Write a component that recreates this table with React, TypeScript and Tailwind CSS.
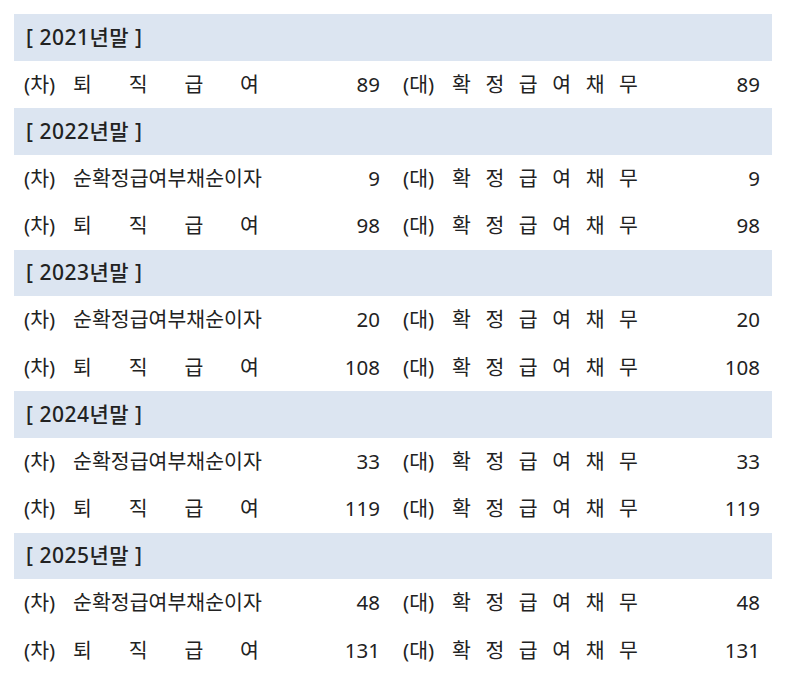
import React from "react";

type Row = { dl: string; dv: number; cv: number; interest?: boolean };
const data: { year: string; rows: Row[] }[] = [
  { year: "2021", rows: [{ dl: "퇴직급여", dv: 89, cv: 89 }] },
  { year: "2022", rows: [{ dl: "순확정급여부채순이자", dv: 9, cv: 9, interest: true }, { dl: "퇴직급여", dv: 98, cv: 98 }] },
  { year: "2023", rows: [{ dl: "순확정급여부채순이자", dv: 20, cv: 20, interest: true }, { dl: "퇴직급여", dv: 108, cv: 108 }] },
  { year: "2024", rows: [{ dl: "순확정급여부채순이자", dv: 33, cv: 33, interest: true }, { dl: "퇴직급여", dv: 119, cv: 119 }] },
  { year: "2025", rows: [{ dl: "순확정급여부채순이자", dv: 48, cv: 48, interest: true }, { dl: "퇴직급여", dv: 131, cv: 131 }] },
];

function Spread({ text }: { text: string }) {
  return (
    <div className="flex justify-between">
      {text.split("").map((c, i) => (
        <span key={i}>{c}</span>
      ))}
    </div>
  );
}

export default function App() {
  return (
    <div
      className="bg-white w-[800px] h-[683px] pt-[14px] pl-[14px] text-[#222222] text-[20.5px]"
      style={{ fontFamily: '"Noto Sans", "Noto Sans CJK KR", sans-serif' }}
    >
      <div className="w-[758px]">
        {data.map((g) => (
          <div key={g.year}>
            <div className="h-[46.5px] bg-[#dce5f1] flex items-center pl-[12px] font-medium text-[21px] tracking-[0.5px]">
              [ {g.year}년말 ]
            </div>
            {g.rows.map((r, i) => (
              <div key={i} className="h-[47.5px] grid grid-cols-[54px_200px_124px_52px_200px_128px] items-center">
                <div className="pl-[10px]">(차)</div>
                <div className="pl-[5px]">
                  <div className={r.interest ? "w-[185px]" : "w-[186px]"}>
                    <Spread text={r.dl} />
                  </div>
                </div>
                <div className="text-right pr-[12px]">{r.dv}</div>
                <div className="pl-[11px]">(대)</div>
                <div className="pl-[8px]">
                  <div className="w-[186px]">
                    <Spread text="확정급여채무" />
                  </div>
                </div>
                <div className="text-right pr-[12px]">{r.cv}</div>
              </div>
            ))}
          </div>
        ))}
      </div>
    </div>
  );
}
